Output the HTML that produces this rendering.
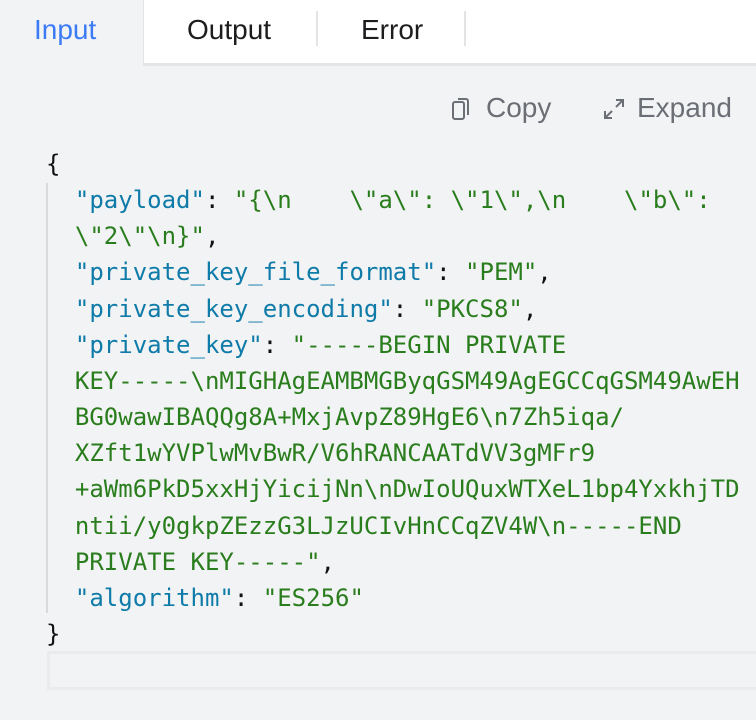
<!DOCTYPE html>
<html><head><style>
body{margin:0;width:756px;height:720px;background:#f2f3f5;font-family:"Liberation Sans",sans-serif;overflow:hidden;position:relative}
.tabs{position:absolute;left:0;top:0;width:756px;height:63px;background:#fff;border-bottom:3px solid #e4e5e8}
.tab{position:absolute;top:14px;font-size:28px;color:#1d1d1f}
.t0{position:absolute;left:0;top:0;width:143px;height:66px;background:#f2f3f5;border-right:1px solid #e2e3e6}
.div{position:absolute;top:11px;width:2px;height:35px;background:#e3e4e6}
.btn{position:absolute;top:92px;font-size:28px;color:#6b6e75}
pre{position:absolute;margin:0;font-family:"DejaVu Sans Mono",monospace;font-size:24px;letter-spacing:0;line-height:36.15px;color:#111}
.k{color:#0f7ba8}.s{color:#2a7d1d}
.vl{position:absolute;left:46px;top:183px;width:2px;height:430px;background:#d8d9dc}
.box{position:absolute;left:47px;top:651px;width:720px;height:33px;border:3px solid #ebebeb;border-right:none}
</style></head><body>
<div class="tabs"></div>
<div class="t0"></div>
<div class="tab" style="left:34px;color:#3b7bf6">Input</div>
<div class="tab" style="left:187px">Output</div>
<div class="div" style="left:316px"></div>
<div class="tab" style="left:361px">Error</div>
<div class="div" style="left:464px"></div>
<svg style="position:absolute;left:451px;top:96px" width="22" height="26" viewBox="0 0 22 26" fill="none" stroke="#6b6e75" stroke-width="2"><rect x="2" y="6" width="11" height="17" rx="2"/><path d="M7 3h8a2 2 0 0 1 2 2v14"/></svg>
<div class="btn" style="left:486px">Copy</div>
<svg style="position:absolute;left:602px;top:97px" width="24" height="24" viewBox="0 0 24 24" fill="none" stroke="#6b6e75" stroke-width="2"><path d="M14 3h7v7M21 3l-7 7M3 14v7h7M3 21l7-7"/></svg>
<div class="btn" style="left:637px">Expand</div>
<div class="vl"></div>
<pre style="left:46px;top:146px">{
  <span class="k">"payload"</span>: <span class="s">"{\n    \"a\": \"1\",\n    \"b\":</span>
  <span class="s">\"2\"\n}"</span>,
  <span class="k">"private_key_file_format"</span>: <span class="s">"PEM"</span>,
  <span class="k">"private_key_encoding"</span>: <span class="s">"PKCS8"</span>,
  <span class="k">"private_key"</span>: <span class="s">"-----BEGIN PRIVATE</span>
<span class="s">  KEY-----\nMIGHAgEAMBMGByqGSM49AgEGCCqGSM49AwEH</span>
<span class="s">  BG0wawIBAQQg8A+MxjAvpZ89HgE6\n7Zh5iqa/</span>
<span class="s">  XZft1wYVPlwMvBwR/V6hRANCAATdVV3gMFr9</span>
<span class="s">  +aWm6PkD5xxHjYicijNn\nDwIoUQuxWTXeL1bp4YxkhjTD</span>
<span class="s">  ntii/y0gkpZEzzG3LJzUCIvHnCCqZV4W\n-----END</span>
<span class="s">  PRIVATE KEY-----"</span>,
  <span class="k">"algorithm"</span>: <span class="s">"ES256"</span>
}</pre>
<div class="box"></div>
</body></html>
